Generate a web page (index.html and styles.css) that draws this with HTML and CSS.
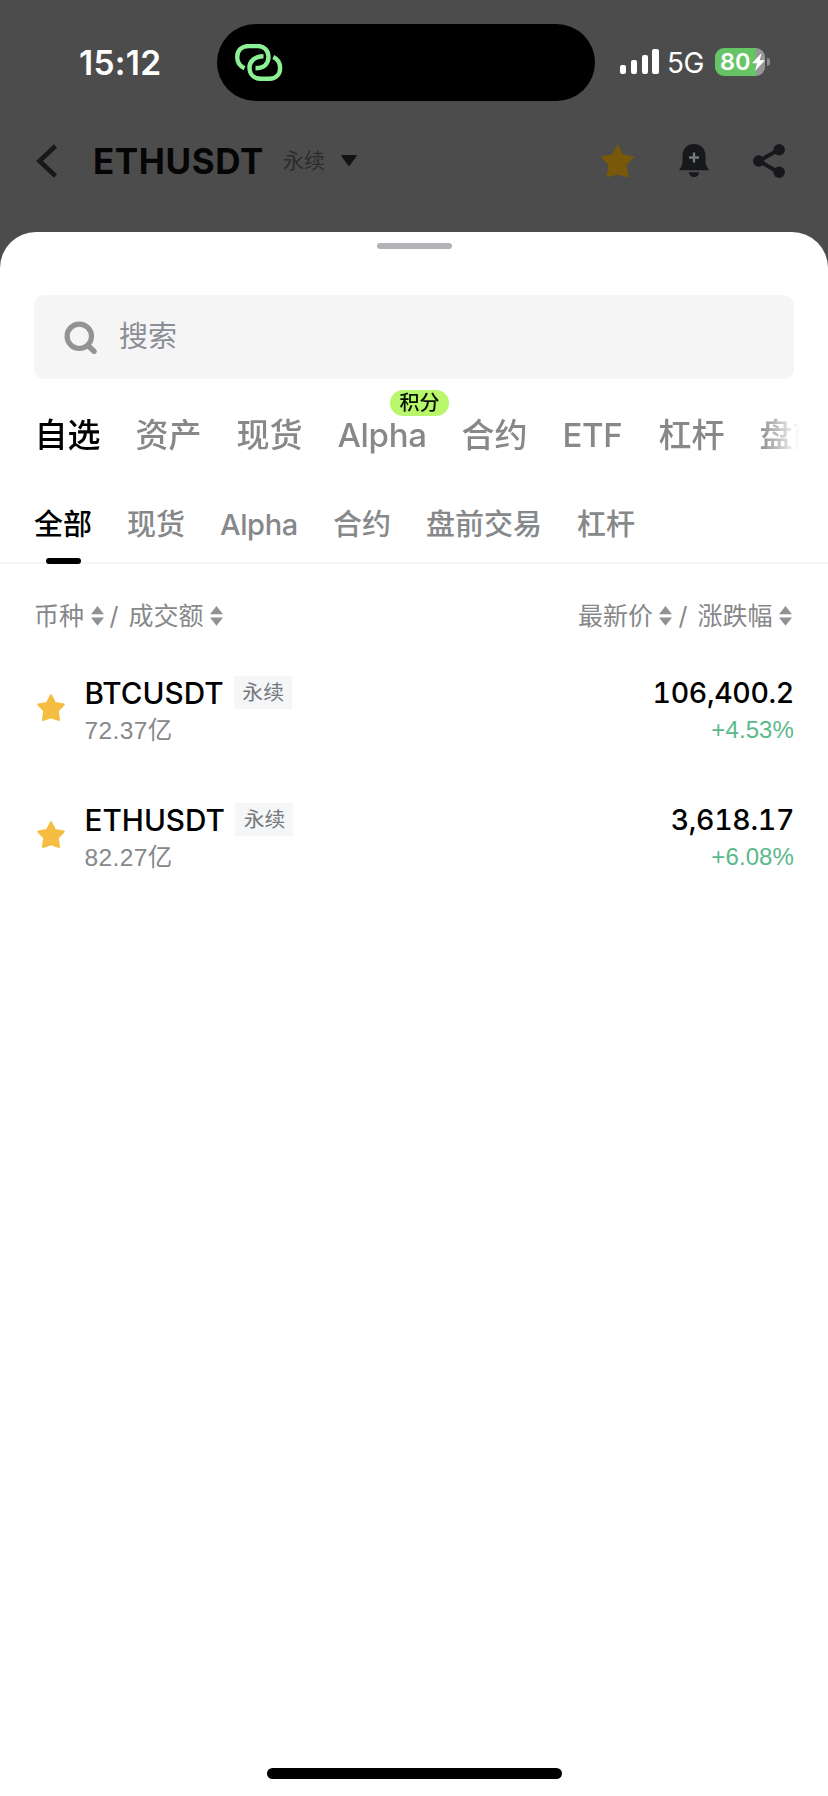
FILE: index.html
```html
<!DOCTYPE html>
<html lang="zh-CN">
<head>
<meta charset="utf-8">
<title>ETHUSDT</title>
<link rel="stylesheet" href="styles.css">
</head>
<body>
<div class="screen">
  <div class="status">
    <div class="time">15:12</div>
    <div class="island">
      <svg class="link" width="50" height="40" viewBox="0 0 50 40" fill="none" stroke="#8cf094" stroke-width="4.4">
        <path d="M10.500 24.200C6 22 3.200 18.500 3.200 13.200C3.200 6.200 8 2 15 2H23.500C30 2 34.500 6.500 34.500 13C34.500 19.500 30 24.300 21.500 24.300"/>
        <path d="M29.500 12.300C21 12.300 15.500 17 15.500 23.500C15.500 30.500 20 34.800 27 34.800H35.500C42 34.800 46.100 30.500 46.100 24C46.100 18.500 43.500 15 39.300 13"/>
      </svg>
    </div>
    <div class="signal">
      <i class="bar bar-1"></i><i class="bar bar-2"></i><i class="bar bar-3"></i><i class="bar bar-4"></i>
    </div>
    <div class="network">5G</div>
    <div class="battery">
      <span>80</span>
      <svg width="13" height="18" viewBox="0 0 13 18"><path d="M9.500 0L0 10.300H5L3 18L13 7.300H7.800Z" fill="#fff"/></svg>
    </div>
    <i class="nub"></i>
  </div>

  <div class="topbar">
    <svg class="back" width="22" height="34" viewBox="0 0 22 34" fill="none" stroke="#17181a" stroke-width="4.600"><path d="M19.500 2L3.500 17L19.500 32"/></svg>
    <h1 class="title">ETHUSDT</h1>
    <span class="kind">永续</span>
    <svg class="caret" width="16" height="11" viewBox="0 0 16 11"><path d="M1 0H15Q16.500 0 15.500 1.200L9 10.200Q8 11.300 7 10.200L.5 1.200Q-.5 0 1 0Z" fill="#111214"/></svg>
    <div class="actions">
      <svg width="35" height="34" viewBox="0 0 35 34"><path d="M17.500 0L22.800 10.600L34.500 12.600L26.500 21L28.500 33.500L17.500 30.500L6.500 33.500L8.500 21L0.500 12.600L12.200 10.600Z" fill="#7a5809"/></svg>
      <svg width="30" height="33" viewBox="0 0 30 33" fill="#17181c"><path d="M3.500 12C3.500 4.800 8 0 15 0S26.500 4.800 26.500 12V18C26.500 21 28 23 30 26.300H0C2 23 3.500 21 3.500 18Z"/><path d="M10 28.200H20C20 31 18 33 15 33S10 31 10 28.200Z"/><path d="M15 8.500V18.500M10 13.500H20" stroke="#77787a" stroke-width="2.400"/></svg>
      <svg width="32" height="34" viewBox="0 0 32 34"><path d="M26 5.500L6 17L26 28.500" fill="none" stroke="#17181c" stroke-width="3.800"/><g fill="#17181c"><circle cx="26.200" cy="5.700" r="5.700"/><circle cx="5.700" cy="17" r="5.700"/><circle cx="26.200" cy="28.200" r="5.700"/></g></svg>
    </div>
  </div>

  <main class="sheet">
    <div class="handle"></div>
    <div class="search">
      <svg width="34" height="34" viewBox="0 0 34 34" fill="none" stroke="#929395"><circle cx="15.300" cy="16.300" r="12.200" stroke-width="5.200"/><path d="M24.500 26L30 31.300" stroke-width="5.400" stroke-linecap="round"/></svg>
      <span>搜索</span>
    </div>

    <nav class="tabs">
      <span class="tab active">自选</span>
      <span class="tab">资产</span>
      <span class="tab">现货</span>
      <span class="tab alpha">Alpha<em class="points">积分</em></span>
      <span class="tab">合约</span>
      <span class="tab etf">ETF</span>
      <span class="tab">杠杆</span>
      <span class="tab">盘前</span>
    </nav>

    <nav class="subtabs">
      <span class="subtab active">全部</span>
      <span class="subtab">现货</span>
      <span class="subtab alpha">Alpha</span>
      <span class="subtab">合约</span>
      <span class="subtab">盘前交易</span>
      <span class="subtab">杠杆</span>
    </nav>

    <div class="columns">
      <div class="sorts">
        <span>币种</span>
        <svg class="sort" width="13" height="20" viewBox="0 0 13 20"><path d="M6.500 0L13 8.300H0ZM0 11.500H13L6.500 19.800Z"/></svg>
        <span class="slash">/</span>
        <span>成交额</span>
        <svg class="sort" width="13" height="20" viewBox="0 0 13 20"><path d="M6.500 0L13 8.300H0ZM0 11.500H13L6.500 19.800Z"/></svg>
      </div>
      <div class="sorts">
        <span>最新价</span>
        <svg class="sort" width="13" height="20" viewBox="0 0 13 20"><path d="M6.500 0L13 8.300H0ZM0 11.500H13L6.500 19.800Z"/></svg>
        <span class="slash">/</span>
        <span>涨跌幅</span>
        <svg class="sort" width="13" height="20" viewBox="0 0 13 20"><path d="M6.500 0L13 8.300H0ZM0 11.500H13L6.500 19.800Z"/></svg>
      </div>
    </div>

    <div class="row">
      <svg class="star" width="28" height="28" viewBox="0 0 28 28"><path d="M14 1.200L18 9L26.800 10.600L20.800 16.800L22 26L14 23.300L6 26L7.200 16.800L1.200 10.600L10 9Z" fill="#f5bd41" stroke="#f5bd41" stroke-width="2" stroke-linejoin="round"/></svg>
      <div class="pair">
        <div class="name"><b>BTCUSDT</b><span class="tag">永续</span></div>
        <div class="volume">72.37亿</div>
      </div>
      <div class="quote">
        <div class="price">106,400.2</div>
        <div class="change">+4.53%</div>
      </div>
    </div>
    <div class="row">
      <svg class="star" width="28" height="28" viewBox="0 0 28 28"><path d="M14 1.200L18 9L26.800 10.600L20.800 16.800L22 26L14 23.300L6 26L7.200 16.800L1.200 10.600L10 9Z" fill="#f5bd41" stroke="#f5bd41" stroke-width="2" stroke-linejoin="round"/></svg>
      <div class="pair">
        <div class="name"><b>ETHUSDT</b><span class="tag">永续</span></div>
        <div class="volume">82.27亿</div>
      </div>
      <div class="quote">
        <div class="price">3,618.17</div>
        <div class="change">+6.08%</div>
      </div>
    </div>
    <div class="home"></div>
  </main>
</div>
</body>
</html>
```
FILE: styles.css
```css
* { box-sizing: border-box; }
body { margin: 0; }
svg { display: block; flex: none; }

.screen {
  width: 828px;
  height: 1796px;
  display: flex;
  flex-direction: column;
  overflow: hidden;
  background: #4c4c4c;
  font-family: Inter, "Noto Sans CJK SC", sans-serif;
  white-space: nowrap;
}

.status { display: flex; height: 124px; padding: 24px 0 0 79px; color: #fff; }
.time { width: 138px; height: 77px; line-height: 78px; font-size: 33.500px; font-weight: 600; letter-spacing: .3px; }
.island { width: 378px; height: 77px; border-radius: 39px; background: #000; padding: 20px 0 0 17px; }
.signal { display: flex; align-items: flex-end; gap: 4.600px; width: 47px; height: 50px; margin-left: 25px; }
.bar { width: 6.200px; border-radius: 2px; background: #fff; }
.bar-1 { height: 9px; }
.bar-2 { height: 14px; }
.bar-3 { height: 19px; }
.bar-4 { height: 25px; }
.network { width: 48px; height: 77px; line-height: 78px; font-size: 28px; letter-spacing: -.5px; }
.battery {
  display: flex; align-items: center; width: 50px; height: 28px; margin-top: 24px; padding-left: 5px;
  border-radius: 9px; background: linear-gradient(90deg, #65c466 41px, #969696 41px);
  font-size: 23.500px; font-weight: 600; line-height: 28px;
}
.battery svg { margin-left: 1px; }
.nub { width: 3px; height: 8px; margin: 34px 0 0 2px; border-radius: 0 4px 4px 0; background: #8b8b8b; }

.topbar { display: flex; align-items: center; height: 75px; margin: -1px 0 34px; padding-left: 36px; }
.title { width: 190px; margin: 0 0 0 35px; line-height: 40px; font-size: 35px; font-weight: 700; letter-spacing: .6px; color: #050506; }
.kind { width: 59px; font-size: 21px; line-height: 30px; color: #2b2c2e; }
.caret { margin-left: -1px; }
.actions { display: flex; align-items: center; gap: 44px; margin-left: 243px; }

.sheet { display: flex; flex-direction: column; flex: 1; background: #fff; border-radius: 36px 36px 0 0; }
.handle { width: 75px; height: 6px; margin: 11px 0 0 377px; border-radius: 3px; background: #b3b3b7; }
.search {
  display: flex; align-items: center; gap: 21px; height: 84px; margin: 46px 34px 0; padding-left: 30px;
  border-radius: 10px; background: #f5f5f5; font-size: 29px; color: #8b8f95;
}
.search span { line-height: 40px; }

.tabs {
  display: flex; gap: 35px; height: 94px; padding: 23px 0 0 34.500px; margin-right: 28px; overflow: hidden;
  font-size: 33px; line-height: 66px; color: #86888a; font-weight: 500;
  -webkit-mask-image: linear-gradient(90deg, #000 758px, transparent 800px);
  mask-image: linear-gradient(90deg, #000 758px, transparent 800px);
}
.tab { flex: none; }
.tab.active, .subtab.active { color: #000; font-weight: 500; }
.tab.alpha { position: relative; width: 89px; letter-spacing: -.3px; }
.tab.etf { width: 61px; letter-spacing: -.3px; }
.points {
  position: absolute; left: 52.500px; top: -12px; width: 59px; height: 26px; border-radius: 13px;
  background: #b8f66c; color: #061000; font-size: 20px; line-height: 27px; font-weight: 500; font-style: normal; text-align: center; letter-spacing: 0;
}

.subtabs {
  display: flex; gap: 35px; height: 91px; padding: 17px 0 0 34px;
  border-bottom: 2px solid #f5f5f5; font-size: 29px; line-height: 70px; color: #86888a; font-weight: 500;
}
.subtab.alpha { width: 78px; letter-spacing: -.4px; }
.subtab.active { position: relative; }
.subtab.active::after { content: ""; position: absolute; left: 12px; top: 68px; width: 35px; height: 6px; border-radius: 3px; background: #000; }

.columns { display: flex; justify-content: space-between; height: 104px; padding: 36px 36px 0 34px; }
.sorts { display: flex; align-items: center; height: 33px; font-size: 25px; line-height: 33px; color: #86888a; }
.sort { margin: -2px 0 0 6.500px; fill: #909294; }
.slash { width: 25px; padding-left: 6px; }

.row { display: flex; height: 126.500px; padding: 8px 34px 0 36.500px; }
.star { margin-top: 18px; }
.pair { margin-left: 20px; }
.name { display: flex; height: 34px; line-height: 34px; font-size: 29.700px; color: #000; }
.name b { font-weight: 500; }
.tag { width: 58px; height: 33px; margin: 0 0 0 10.500px; background: #f5f6f7; color: #76797d; font-size: 20.800px; line-height: 33px; text-align: center; }
.volume { height: 36px; line-height: 41px; font-family: "Liberation Sans", "Noto Sans CJK SC", sans-serif; font-size: 24.500px; letter-spacing: .4px; color: #86888a; }
.quote { margin-left: auto; text-align: right; font-variant-numeric: tabular-nums; }
.price { height: 34px; line-height: 34px; font-size: 28.500px; font-weight: 500; letter-spacing: -.35px; color: #000; }
.change { height: 36px; line-height: 40px; font-family: "Liberation Sans", sans-serif; font-size: 24px; letter-spacing: .1px; color: #5bb98b; }
.home { width: 295px; height: 11px; margin: auto 0 17px 267px; border-radius: 6px; background: #000; }
```
